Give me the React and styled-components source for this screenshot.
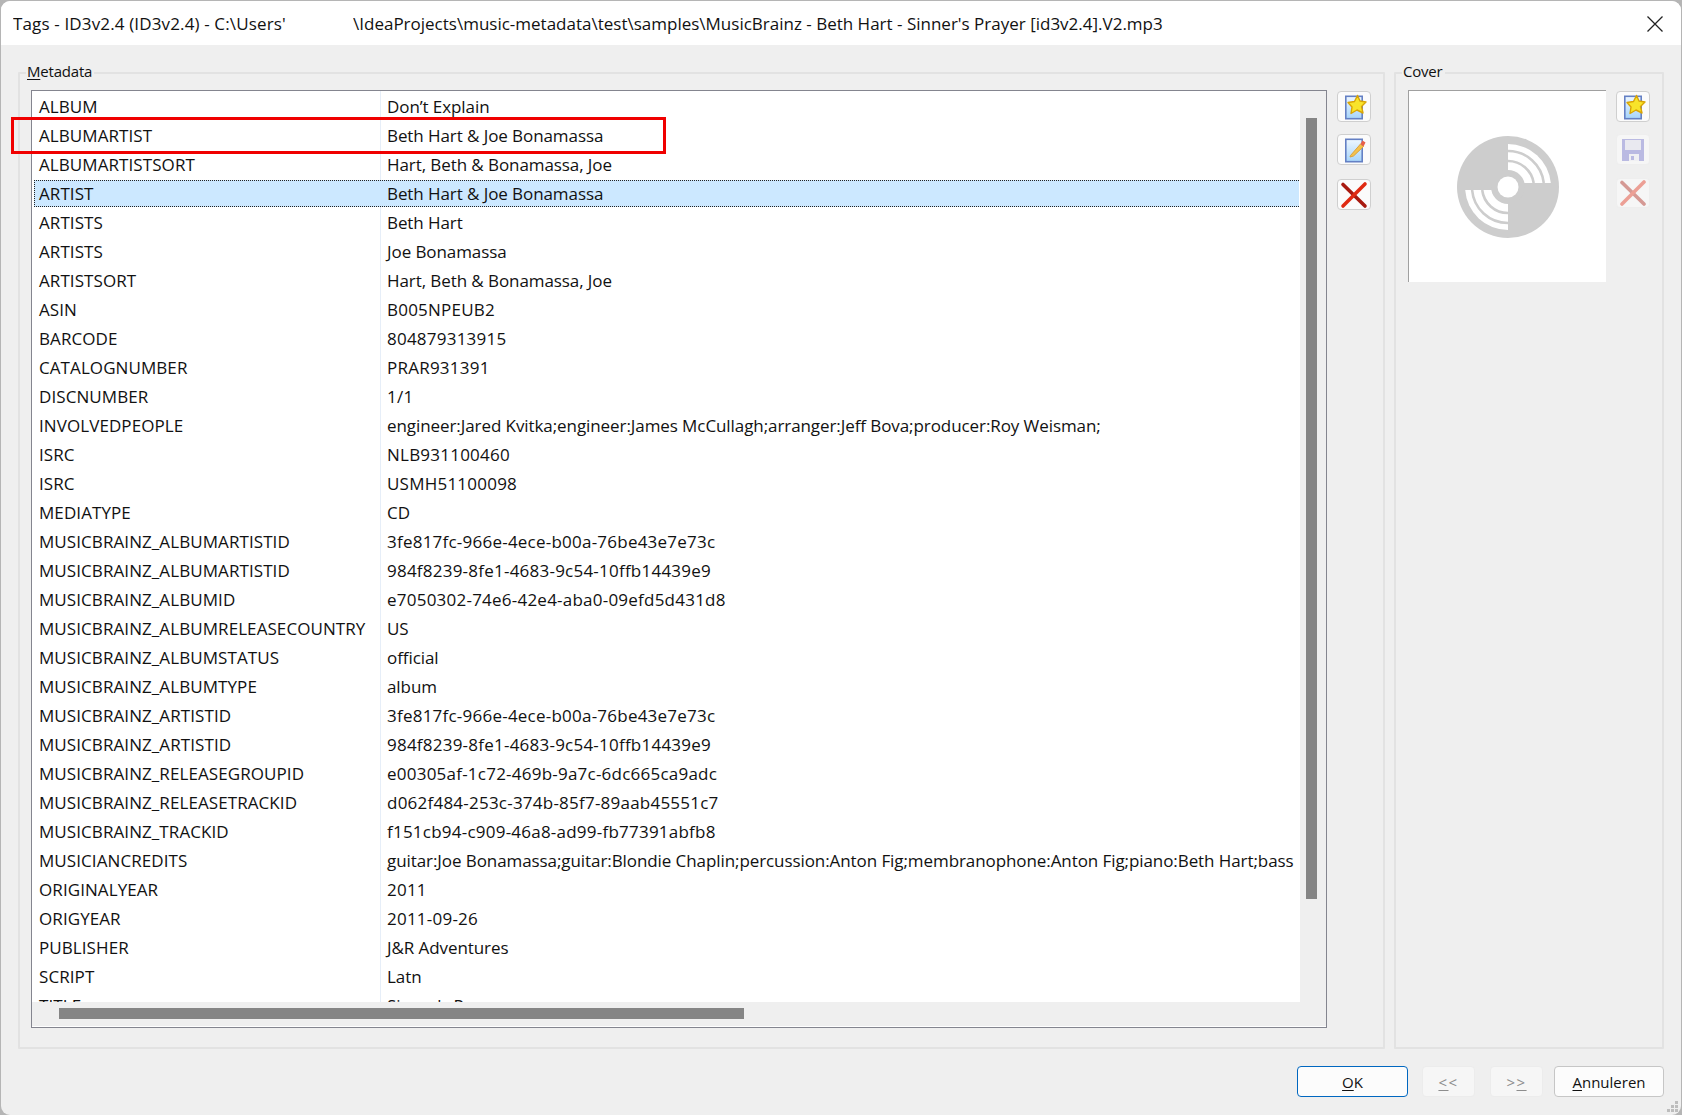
import styled, { createGlobalStyle } from "styled-components";

const rows = [
  ["ALBUM", "Don’t Explain"],
  ["ALBUMARTIST", "Beth Hart & Joe Bonamassa"],
  ["ALBUMARTISTSORT", "Hart, Beth & Bonamassa, Joe"],
  ["ARTIST", "Beth Hart & Joe Bonamassa", true],
  ["ARTISTS", "Beth Hart"],
  ["ARTISTS", "Joe Bonamassa"],
  ["ARTISTSORT", "Hart, Beth & Bonamassa, Joe"],
  ["ASIN", "B005NPEUB2"],
  ["BARCODE", "804879313915"],
  ["CATALOGNUMBER", "PRAR931391"],
  ["DISCNUMBER", "1/1"],
  ["INVOLVEDPEOPLE", "engineer:Jared Kvitka;engineer:James McCullagh;arranger:Jeff Bova;producer:Roy Weisman;"],
  ["ISRC", "NLB931100460"],
  ["ISRC", "USMH51100098"],
  ["MEDIATYPE", "CD"],
  ["MUSICBRAINZ_ALBUMARTISTID", "3fe817fc-966e-4ece-b00a-76be43e7e73c"],
  ["MUSICBRAINZ_ALBUMARTISTID", "984f8239-8fe1-4683-9c54-10ffb14439e9"],
  ["MUSICBRAINZ_ALBUMID", "e7050302-74e6-42e4-aba0-09efd5d431d8"],
  ["MUSICBRAINZ_ALBUMRELEASECOUNTRY", "US"],
  ["MUSICBRAINZ_ALBUMSTATUS", "official"],
  ["MUSICBRAINZ_ALBUMTYPE", "album"],
  ["MUSICBRAINZ_ARTISTID", "3fe817fc-966e-4ece-b00a-76be43e7e73c"],
  ["MUSICBRAINZ_ARTISTID", "984f8239-8fe1-4683-9c54-10ffb14439e9"],
  ["MUSICBRAINZ_RELEASEGROUPID", "e00305af-1c72-469b-9a7c-6dc665ca9adc"],
  ["MUSICBRAINZ_RELEASETRACKID", "d062f484-253c-374b-85f7-89aab45551c7"],
  ["MUSICBRAINZ_TRACKID", "f151cb94-c909-46a8-ad99-fb77391abfb8"],
  ["MUSICIANCREDITS", "guitar:Joe Bonamassa;guitar:Blondie Chaplin;percussion:Anton Fig;membranophone:Anton Fig;piano:Beth Hart;bass"],
  ["ORIGINALYEAR", "2011"],
  ["ORIGYEAR", "2011-09-26"],
  ["PUBLISHER", "J&R Adventures"],
  ["SCRIPT", "Latn"],
  ["TITLE", "Sinner's Prayer"],
];

const PageStyle = createGlobalStyle`
  html, body {
    margin: 0;
    padding: 0;
    background: #b5b5b5;
  }
  body {
    font-family: "Open Sans", "Noto Sans", sans-serif;
    color: #111;
  }
`;

const Window = styled.div`
  width: 1680px;
  height: 1114px;
  margin: 1px 0 0 1px;
  background: #efefef;
  border-radius: 9px;
  overflow: hidden;
  display: flex;
  flex-direction: column;
  position: relative;
`;

const TitleBar = styled.div`
  height: 44px;
  flex: none;
  box-sizing: border-box;
  background: #fff;
  display: flex;
  align-items: center;
  padding: 1px 17px 0 12px;
  font-size: 17px;
  white-space: nowrap;
`;

const TitlePart = styled.span`
  width: ${(p) => p.$width || "auto"};
  overflow: hidden;
  letter-spacing: ${(p) => p.$spacing || "0"};
`;

const CloseButton = styled.div`
  margin-left: auto;
  display: flex;
`;

const Body = styled.div`
  flex: 1;
  display: flex;
  gap: 9px;
  padding: 27px 18px 0 17px;
  min-height: 0;
`;

const Group = styled.fieldset`
  margin: 0;
  padding: 0;
  box-sizing: border-box;
  border: 2px solid #e2e2e2;
  border-radius: 1px;
  width: ${(p) => p.$width};
  height: 977px;
  position: relative;
  flex: none;
  display: flex;
  align-items: flex-start;
`;

const GroupTitle = styled.span`
  position: absolute;
  top: -14px;
  left: 6px;
  padding: 0 2px 0 1px;
  background: #efefef;
  font-size: 15px;
  line-height: 22px;
  letter-spacing: -0.2px;
`;

const Accel = styled.span`
  text-decoration: underline;
  text-underline-offset: 2px;
`;

const ListFrame = styled.div`
  margin: 16px 0 0 11px;
  width: 1296px;
  height: 938px;
  box-sizing: border-box;
  border: 1px solid #84858f;
  background: #efefef;
  box-shadow: inset 0 -1px 0 #fff;
  position: relative;
  overflow: hidden;
`;

const ListBody = styled.div`
  height: 911px;
  width: 1268px;
  padding-top: 2px;
  box-sizing: border-box;
  overflow: hidden;
  position: relative;
  background: #fff;
`;

const ColumnLine = styled.div`
  position: absolute;
  top: 0;
  bottom: 0;
  left: 348px;
  width: 1px;
  background: #e6eef8;
`;

const Row = styled.div`
  height: 29px;
  padding-bottom: 2px;
  box-sizing: border-box;
  display: flex;
  align-items: center;
  font-size: 17px;
  white-space: nowrap;
  position: relative;
  overflow: hidden;
`;

const Selection = styled.div`
  position: absolute;
  top: 0;
  left: 2px;
  right: 1px;
  height: 27px;
  box-sizing: border-box;
  background: #cce8ff;
  border-top: 1px dotted #222;
  border-bottom: 1px dotted #222;
  border-left: 1px dotted #222;
`;

const NameCell = styled.span`
  position: relative;
  flex: none;
  width: 349px;
  padding-left: 7px;
  box-sizing: border-box;
  letter-spacing: 0.08px;
`;

const ValueCell = styled.span`
  position: relative;
  padding-left: 6px;
  letter-spacing: ${(p) => (p.$digits ? "0.23px" : "-0.08px")};
`;

const VScrollTrack = styled.div`
  position: absolute;
  top: 0;
  right: 0;
  bottom: 0;
  width: 26px;
`;

const VThumb = styled.div`
  position: absolute;
  top: 27px;
  left: 6px;
  width: 11px;
  height: 781px;
  background: #858585;
`;

const HScrollTrack = styled.div`
  height: 25px;
  position: relative;
`;

const HThumb = styled.div`
  position: absolute;
  top: 6px;
  left: 27px;
  width: 685px;
  height: 11px;
  background: #858585;
`;

const IconColumn = styled.div`
  display: flex;
  flex-direction: column;
  margin: 17px 0 0 10px;
`;

const IconBtn = styled.div`
  width: 34px;
  height: ${(p) => p.$height || "31px"};
  margin-bottom: ${(p) => p.$gap || "12px"};
  box-sizing: border-box;
  border: 1px solid ${(p) => (p.$off ? "#eeeeee" : "#cfcfcf")};
  border-radius: 4px;
  background: ${(p) => (p.$off ? "#f6f6f6" : "#fbfbfb")};
  display: flex;
  align-items: center;
  justify-content: center;
`;

const CoverBox = styled.div`
  margin: 16px 0 0 12px;
  width: 198px;
  height: 192px;
  box-sizing: border-box;
  background: #fff;
  border-top: 1px solid #a0a0a0;
  border-left: 1px solid #a0a0a0;
  display: flex;
  align-items: center;
  justify-content: center;
`;

const Footer = styled.div`
  height: 66px;
  flex: none;
  box-sizing: border-box;
  display: flex;
  justify-content: flex-end;
  align-items: flex-start;
  padding: 17px 17px 0 0;
  position: relative;
`;

const DialogButton = styled.div`
  width: ${(p) => p.$width};
  margin-left: ${(p) => p.$gap || "0"};
  height: 31px;
  box-sizing: border-box;
  border-radius: 4px;
  border: 1px solid ${(p) => (p.$primary ? "#0067c0" : p.$off ? "#ececec" : "#c6c6c6")};
  background: ${(p) => (p.$off ? "#f6f6f6" : "#fcfcfc")};
  color: ${(p) => (p.$off ? "#8d8d8d" : "#111")};
  font-size: 15px;
  display: flex;
  align-items: center;
  justify-content: center;
  letter-spacing: ${(p) => (p.$off ? "1.5px" : "0")};
`;

const Grip = styled.div`
  position: absolute;
  right: 2px;
  bottom: 2px;
  display: flex;
`;

const Highlight = styled.div`
  position: absolute;
  left: 10px;
  top: 116px;
  width: 655px;
  height: 37px;
  box-sizing: border-box;
  border: 3px solid #f00000;
  pointer-events: none;
`;

function NoteBase({ children }) {
  return (
    <svg width="30" height="30" viewBox="0 0 30 30">
      <defs>
        <linearGradient id="noteFill" x1="0" y1="0" x2="0" y2="1">
          <stop offset="0" stopColor="#eef7ff" />
          <stop offset="1" stopColor="#a6d4fa" />
        </linearGradient>
      </defs>
      <rect x="6.8" y="4.3" width="16.4" height="22.4" fill="url(#noteFill)" stroke="#6480c4" strokeWidth="1.6" />
      {children}
    </svg>
  );
}

function StarIcon() {
  return (
    <NoteBase>
      <path
        d="M18.5 3.5 L21 9 L27 10 L22.5 14.5 L24 21 L18 18 L12 21.5 L13 15 L9 10.5 L15.5 9.5 Z"
        fill="#f8e42a"
        stroke="#d9a406"
        strokeWidth="1.4"
        strokeLinejoin="round"
      />
    </NoteBase>
  );
}

function PencilIcon() {
  return (
    <NoteBase>
      <path d="M11.5 20.5 L21.5 9 L24.5 11.5 L14.5 21 L11 22 Z" fill="#f4c24c" stroke="#dba23a" strokeWidth="1" />
      <path d="M21.5 9 L23.5 5.5 L26.5 7.5 L24.5 11.5 Z" fill="#e8604a" />
    </NoteBase>
  );
}

function DeleteIcon({ off }) {
  return (
    <svg width="28" height="28" viewBox="0 0 28 28" opacity={off ? 0.42 : 1}>
      <path d="M3 3.5 L25 25" stroke="#a81a10" strokeWidth="3.6" strokeLinecap="round" />
      <path d="M25 3 L3 25" stroke="#e02a12" strokeWidth="3.6" strokeLinecap="round" />
    </svg>
  );
}

function SaveIcon() {
  return (
    <svg width="24" height="24" viewBox="0 0 24 24" opacity="0.42">
      <path d="M1 1 H23 V23 H1 Z" fill="#6a6ac8" />
      <rect x="4" y="2" width="16" height="10" fill="#d8d8e8" />
      <rect x="8" y="16" width="10" height="7" fill="#e8e8f0" />
      <rect x="10" y="18" width="3" height="4" fill="#6a6ac8" />
    </svg>
  );
}

function DiscIcon() {
  return (
    <svg width="102" height="102" viewBox="0 0 102 102">
      <circle cx="51" cy="51" r="51" fill="#cdcdcd" />
      <path d="M51 8 A43 43 0 0 1 93.8 47 H51 Z" fill="#fff" />
      <path d="M51 94 A43 43 0 0 1 8.2 54 H51 Z" fill="#fff" />
      <g fill="none" stroke="#cdcdcd" strokeWidth="2.6">
        <path d="M51 15 A36 36 0 0 1 86.8 47" />
        <path d="M51 25 A26 26 0 0 1 76.7 47" />
        <path d="M51 87 A36 36 0 0 1 15.1 54" />
        <path d="M51 77 A26 26 0 0 1 25.2 54" />
      </g>
      <circle cx="51" cy="51" r="17" fill="#cdcdcd" />
      <circle cx="51" cy="51" r="10.5" fill="#fff" />
    </svg>
  );
}

function GripIcon() {
  return (
    <svg width="12" height="12" viewBox="0 0 12 12" fill="#bdbdbd">
      <rect x="8" y="0" width="3" height="3" />
      <rect x="4" y="4" width="3" height="3" />
      <rect x="8" y="4" width="3" height="3" />
      <rect x="0" y="8" width="3" height="3" />
      <rect x="4" y="8" width="3" height="3" />
      <rect x="8" y="8" width="3" height="3" />
    </svg>
  );
}

export default function App() {
  return (
    <>
      <PageStyle />
      <Window>
        <TitleBar>
          <TitlePart $width="340px" $spacing="0.14px">Tags - ID3v2.4 (ID3v2.4) - C:\Users'</TitlePart>
          <TitlePart>\IdeaProjects\music-metadata\test\samples\MusicBrainz - Beth Hart - Sinner's Prayer [id3v2.4].V2.mp3</TitlePart>
          <CloseButton>
            <svg width="18" height="18" viewBox="0 0 18 18" stroke="#222" strokeWidth="1.3">
              <path d="M1.5 1.5 L16.5 16.5 M16.5 1.5 L1.5 16.5" />
            </svg>
          </CloseButton>
        </TitleBar>
        <Body>
          <Group $width="1367px">
            <GroupTitle>
              <Accel>M</Accel>etadata
            </GroupTitle>
            <ListFrame>
              <ListBody>
                <ColumnLine />
                {rows.map(([name, value, selected], i) => (
                  <Row key={i}>
                    {selected && <Selection />}
                    <NameCell>{name}</NameCell>
                    <ValueCell $digits={/\d/.test(value)}>{value}</ValueCell>
                  </Row>
                ))}
              </ListBody>
              <VScrollTrack>
                <VThumb />
              </VScrollTrack>
              <HScrollTrack>
                <HThumb />
              </HScrollTrack>
            </ListFrame>
            <IconColumn>
              <IconBtn>
                <StarIcon />
              </IconBtn>
              <IconBtn $gap="14px">
                <PencilIcon />
              </IconBtn>
              <IconBtn>
                <DeleteIcon />
              </IconBtn>
            </IconColumn>
          </Group>
          <Group $width="270px">
            <GroupTitle>Cover</GroupTitle>
            <CoverBox>
              <DiscIcon />
            </CoverBox>
            <IconColumn>
              <IconBtn>
                <StarIcon />
              </IconBtn>
              <IconBtn $off $gap="13px">
                <SaveIcon />
              </IconBtn>
              <IconBtn $off $height="30px">
                <DeleteIcon off />
              </IconBtn>
            </IconColumn>
          </Group>
        </Body>
        <Footer>
          <DialogButton $width="111px" $primary>
            <span>
              <Accel>O</Accel>K
            </span>
          </DialogButton>
          <DialogButton $width="53px" $off $gap="14px">
            <span>
              <Accel>&lt;</Accel>&lt;
            </span>
          </DialogButton>
          <DialogButton $width="53px" $off $gap="15px">
            <span>
              &gt;<Accel>&gt;</Accel>
            </span>
          </DialogButton>
          <DialogButton $width="110px" $gap="11px">
            <span>
              <Accel>A</Accel>nnuleren
            </span>
          </DialogButton>
          <Grip>
            <GripIcon />
          </Grip>
        </Footer>
        <Highlight />
      </Window>
    </>
  );
}
